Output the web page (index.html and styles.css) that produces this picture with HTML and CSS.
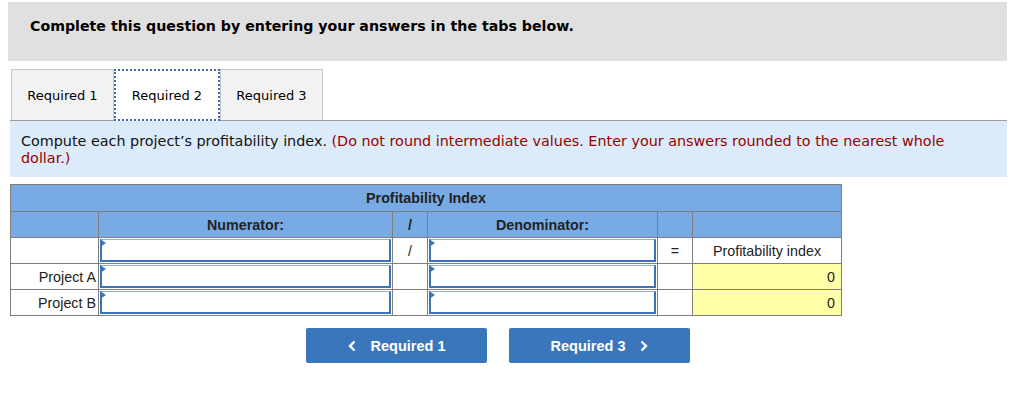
FILE: index.html
```html
<!DOCTYPE html>
<html>
<head>
<meta charset="utf-8">
<link rel="stylesheet" href="styles.css">
</head>
<body>
<div class="page">
  <div class="banner">Complete this question by entering your answers in the tabs below.</div>
  <div class="section">
    <div class="tabs">
      <div class="tab">Required 1</div>
      <div class="tab active">Required 2</div>
      <div class="tab">Required 3</div>
    </div>
    <div class="instructions">Compute each project’s profitability index. <span class="note">(Do not round intermediate values. Enter your answers rounded to the nearest whole dollar.)</span></div>
    <table class="grid">
      <colgroup>
        <col class="c-label"><col class="c-num"><col class="c-op"><col class="c-den"><col class="c-op"><col class="c-res">
      </colgroup>
      <tr class="head title"><th colspan="6">Profitability Index</th></tr>
      <tr class="head">
        <th></th><th>Numerator:</th><th>/</th><th>Denominator:</th><th></th><th></th>
      </tr>
      <tr>
        <td></td>
        <td class="inp"><input type="text"></td>
        <td class="op">/</td>
        <td class="inp"><input type="text"></td>
        <td class="op">=</td>
        <td class="center">Profitability index</td>
      </tr>
      <tr>
        <td class="label">Project A</td>
        <td class="inp"><input type="text"></td>
        <td></td>
        <td class="inp"><input type="text"></td>
        <td></td>
        <td class="result">0</td>
      </tr>
      <tr>
        <td class="label">Project B</td>
        <td class="inp"><input type="text"></td>
        <td></td>
        <td class="inp"><input type="text"></td>
        <td></td>
        <td class="result">0</td>
      </tr>
    </table>
    <div class="nav">
      <button class="btn"><svg class="chev" width="8" height="12" viewBox="0 0 8 12"><path d="M6.5 1.5 L2 6 L6.5 10.5" fill="none" stroke="#fff" stroke-width="2.4"/></svg><span>Required 1</span></button>
      <button class="btn"><span>Required 3</span><svg class="chev" width="8" height="12" viewBox="0 0 8 12"><path d="M1.5 1.5 L6 6 L1.5 10.5" fill="none" stroke="#fff" stroke-width="2.4"/></svg></button>
    </div>
  </div>
</div>
</body>
</html>
```

FILE: styles.css
```css
html, body {
  margin: 0;
  padding: 0;
  background: #fff;
}

.page {
  padding: 2px 0 0 8px;
  width: 999px;
  font-family: "DejaVu Sans", Verdana, sans-serif;
  color: #000;
}

.banner {
  box-sizing: border-box;
  height: 59px;
  background: #e0e0e0;
  padding: 16px 0 0 22px;
  font-weight: bold;
  font-size: 14.2px;
  line-height: 17px;
}

.section {
  margin-left: 2px;
  width: 997px;
}

.tabs {
  display: flex;
  margin-top: 8px;
  padding-left: 1px;
  border-bottom: 1px solid #9c9c9c;
}

.tab {
  box-sizing: border-box;
  height: 51px;
  display: flex;
  align-items: center;
  justify-content: center;
  padding-top: 1px;
  font-size: 13px;
  background: #f2f2f2;
  border: 1px solid #c8c8c8;
  border-bottom: none;
  width: 103px;
}

.tab.active {
  background: #fff;
  border: 2px dotted #3d6fb0;
  width: 106px;
  height: 52px;
  margin-bottom: -1px;
}

.instructions {
  background: #dbebf9;
  padding: 12px 50px 10px 11px;
  font-size: 14.35px;
  line-height: 17px;
  color: #111;
}

.note {
  color: #980000;
}

.grid {
  margin-top: 7px;
  border-collapse: collapse;
  table-layout: fixed;
  width: 831px;
  font-family: "Liberation Sans", Arial, sans-serif;
  font-size: 14.3px;
  color: #222;
}

.c-label { width: 88px; }
.c-num { width: 294px; }
.c-op { width: 35px; }
.c-den { width: 230px; }
.c-res { width: 149px; }

.grid th, .grid td {
  border: 1px solid #7e7e7e;
  height: 25px;
  padding: 0 3px;
}

.grid tr.head th {
  background: #78abe3;
  font-weight: bold;
  text-align: center;
  color: #222;
}

.grid tr.title th {
  height: 26px;
}

.grid td.op, .grid td.center {
  text-align: center;
}

.grid td.label {
  text-align: right;
  padding-right: 2px;
}

.grid td.result {
  background: #ffffa8;
  text-align: right;
  padding-right: 6px;
}

.grid td.inp {
  position: relative;
  padding: 1px;
  height: 23px;
}

.grid td.inp::before {
  content: "";
  position: absolute;
  top: 1px;
  left: 1px;
  border-left: 6px solid #3a73b8;
  border-top: 4px solid transparent;
  border-bottom: 4px solid transparent;
}

.grid td.inp input {
  display: block;
  box-sizing: border-box;
  width: 100%;
  height: 23px;
  margin: 0;
  border: 2px solid #3a73b8;
  border-top-width: 1px;
  border-top-color: #8fb0d9;
  background: #fff;
  outline: none;
}

.nav {
  display: flex;
  gap: 22px;
  margin-top: 12px;
  padding-left: 296px;
}

.btn {
  box-sizing: border-box;
  width: 181px;
  height: 35px;
  border: none;
  border-radius: 2px;
  background: #3a76bb;
  color: #fff;
  font-family: "Liberation Sans", Arial, sans-serif;
  font-weight: bold;
  font-size: 14.5px;
  display: flex;
  align-items: center;
  justify-content: center;
  gap: 15px;
  padding: 0;
}

.chev {
  display: block;
}
```
